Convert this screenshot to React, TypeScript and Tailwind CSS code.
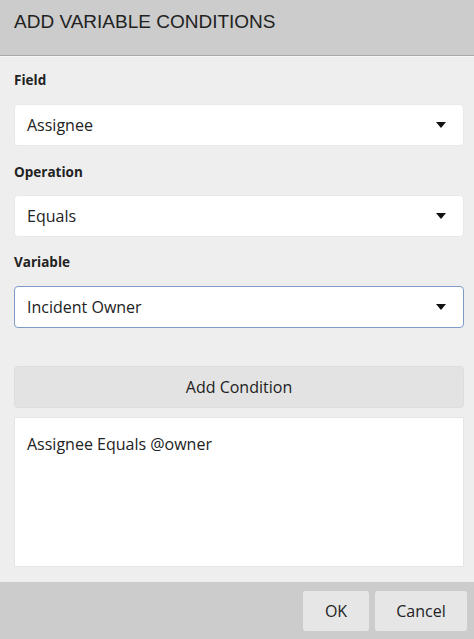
const ui = { fontFamily: '"Open Sans", "Noto Sans", sans-serif' };

function Caret() {
  return (
    <svg width="10" height="6" viewBox="0 0 10 6" className="shrink-0">
      <path d="M0 0 H10 L5 6 Z" fill="#111" />
    </svg>
  );
}

function Select({ value, focused }: { value: string; focused?: boolean }) {
  return (
    <div
      className={`flex items-center justify-between h-[42px] pl-[12px] pr-[17px] bg-white rounded-[4px] border ${
        focused ? "border-[#7d9ccb]" : "border-[#e9e9e9]"
      }`}
    >
      <span className="text-[16px] text-[#222]">{value}</span>
      <Caret />
    </div>
  );
}

function Label({ children }: { children: string }) {
  return <div className="text-[13.5px] font-bold text-[#222] leading-[20px]">{children}</div>;
}

export default function App() {
  return (
    <div className="w-[474px] h-[639px] bg-[#eeeeee] flex flex-col" style={ui}>
      {/* Header */}
      <div className="h-[56px] shrink-0 bg-[#cccccc] border-b border-[#a9a9a9] flex items-center px-[14px] pb-[12px] shadow-[0_1px_0_#f6f6f6]">
        <h1 className="text-[19px] text-[#222] leading-none" style={{ fontFamily: '"Liberation Sans", Arial, sans-serif' }}>
          ADD VARIABLE CONDITIONS
        </h1>
      </div>

      {/* Body */}
      <div className="flex-1 flex flex-col pl-[14px] pr-[10px] pt-[14px]">
        <Label>Field</Label>
        <div className="mt-[14px]">
          <Select value="Assignee" />
        </div>
        <div className="mt-[16px]">
          <Label>Operation</Label>
        </div>
        <div className="mt-[13px]">
          <Select value="Equals" />
        </div>
        <div className="mt-[15px]">
          <Label>Variable</Label>
        </div>
        <div className="mt-[14px]">
          <Select value="Incident Owner" focused />
        </div>

        <button className="mt-[38px] h-[42px] w-full bg-[#e3e3e3] border border-[#dddddd] rounded-[4px] text-[16px] text-[#222]">
          Add Condition
        </button>

        <div className="mt-[9px] h-[150px] bg-white border border-[#e6e6e6] px-[12px] pt-[14px] text-[16px] text-[#222]">
          Assignee Equals @owner
        </div>
      </div>

      {/* Footer */}
      <div className="h-[57px] shrink-0 bg-[#cccccc] flex items-start justify-end gap-[6px] pt-[9px] pr-[7px]">
        <button className="w-[66px] h-[40px] bg-[#e6e6e6] rounded-[3px] text-[16px] text-[#222]">OK</button>
        <button className="w-[92px] h-[40px] bg-[#e6e6e6] rounded-[3px] text-[16px] text-[#222]">Cancel</button>
      </div>
    </div>
  );
}
